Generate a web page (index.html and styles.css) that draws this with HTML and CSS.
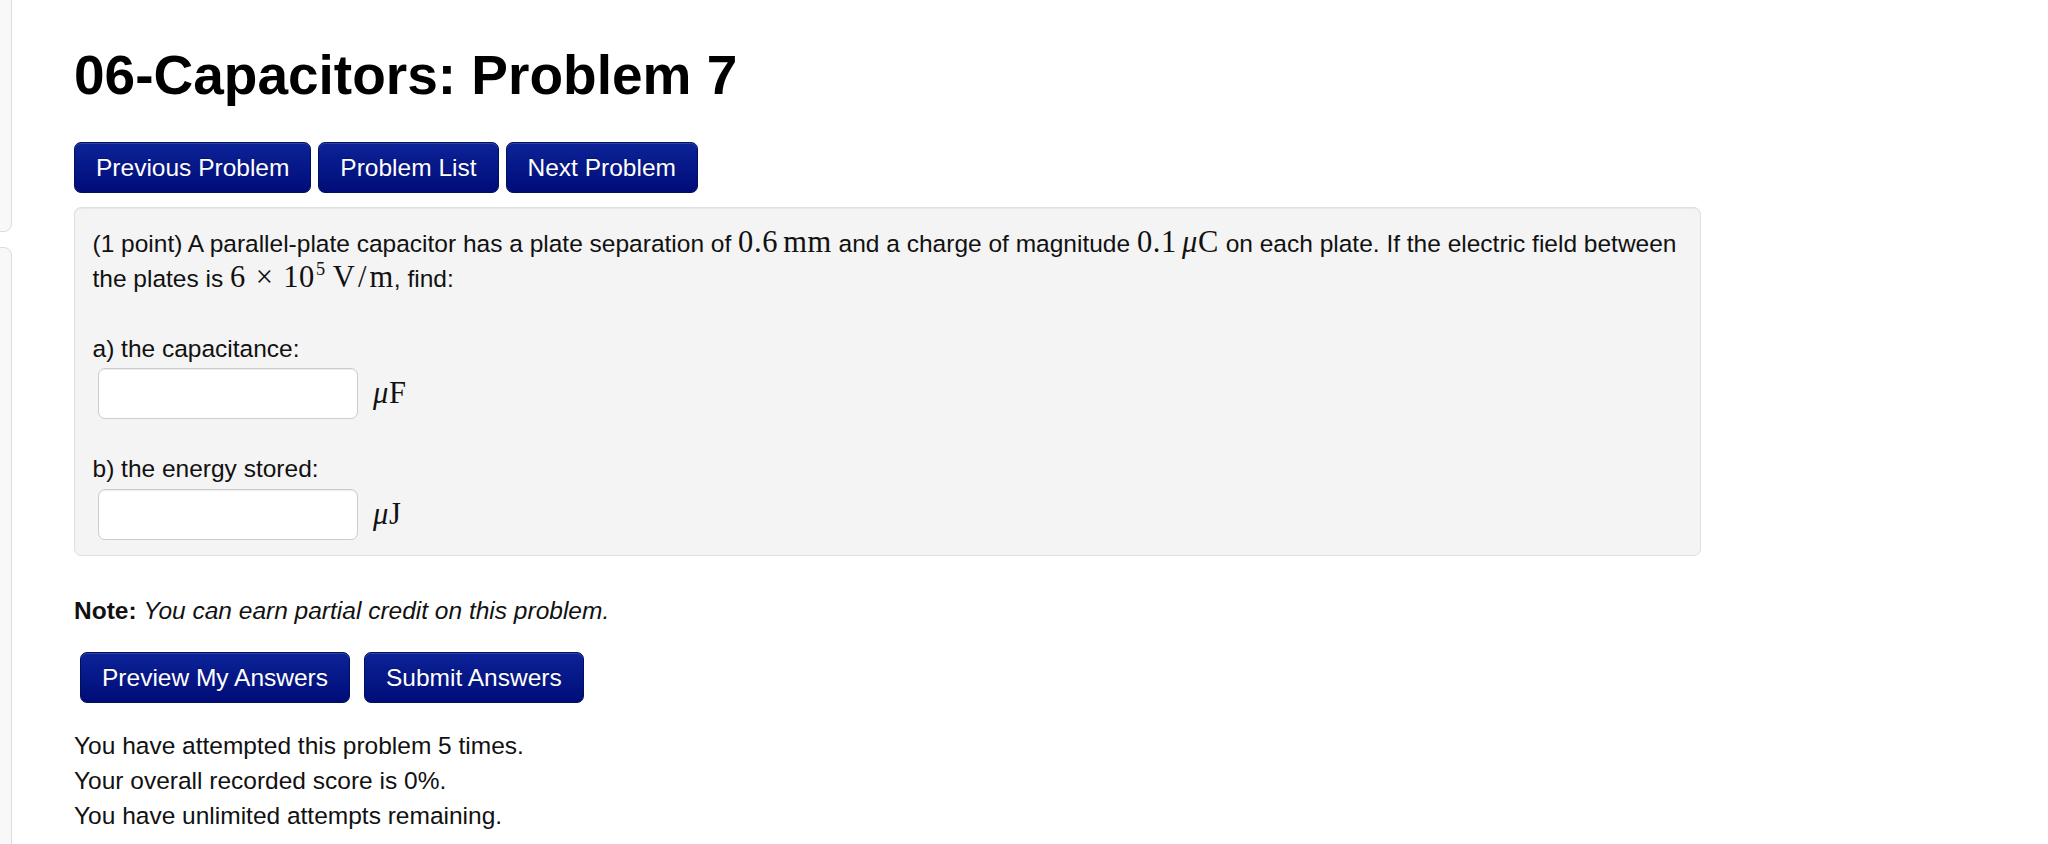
FILE: index.html
```html
<!DOCTYPE html>
<html lang="en">

<head>
	<meta charset="utf-8">
	<title>06-Capacitors: Problem 7</title>
	<link rel="stylesheet" href="styles.css">
</head>

<body>
	<div class="page">
		<aside class="side">
			<div class="side-box first"></div>
			<div class="side-box"></div>
		</aside>
		<main class="main">
			<h1>06-Capacitors: Problem 7</h1>
			<div class="nav">
				<a class="btn" href="#">Previous Problem</a>
				<a class="btn" href="#">Problem List</a>
				<a class="btn" href="#">Next Problem</a>
			</div>
			<form class="problem-form" onsubmit="return false">
				<div class="problem">
					<div class="text">
						(1 point) A parallel-plate capacitor has a plate separation of
						<span class="m">0.6<span class="ts"></span>mm</span>
						and a charge of magnitude
						<span class="m">0.1<span class="ts"></span><i>μ</i>C</span>
						on each plate. If the electric field between the plates is
						<span class="m">6<span class="op">×</span>10<span class="sup">5</span><span class="ts"></span>V<span class="sl">/</span>m</span>, find:
					</div>
					<div class="q">a) the capacitance:</div>
					<div class="ans">
						<input type="text" name="AnSwEr0001">
						<span class="unit"><i>μ</i>F</span>
					</div>
					<div class="q second">b) the energy stored:</div>
					<div class="ans last">
						<input type="text" name="AnSwEr0002">
						<span class="unit"><i>μ</i>J</span>
					</div>
				</div>
				<p class="note"><b>Note:</b> <i>You can earn partial credit on this problem.</i></p>
				<div class="actions">
					<button class="btn" type="button">Preview My Answers</button>
					<button class="btn" type="submit">Submit Answers</button>
				</div>
			</form>
			<div class="attempts">
				You have attempted this problem 5 times.<br>
				Your overall recorded score is 0%.<br>
				You have unlimited attempts remaining.
			</div>
		</main>
	</div>
</body>

</html>
```

FILE: styles.css
```css
:root {
	--c-text: #111;
	--c-well: #f4f4f4;
	--c-well-b: #e0e0e0;
	--c-side: #f8f8f8;
	--c-side-b: #dcdcdc;
	--c-btn-t: #0c2398;
	--c-btn-b: #000c78;
	--c-btn-bd: #00105a;
}

body {
	margin: 0;
	font-family: "Liberation Sans", Arial, sans-serif;
	font-size: 24.5px;
	line-height: 35px;
	color: var(--c-text);
	background: #fff;
	overflow: hidden;
}

.page {
	display: flex;
	min-height: 844px;
}

/* edge of the collapsed sidebar on the left */
.side {
	flex: none;
	width: 13px;
	overflow: hidden;
	display: flex;
	flex-direction: column;
	gap: 15px;
}

.side-box {
	box-sizing: border-box;
	width: 42px;
	margin-left: -30px;
	background: var(--c-side);
	border: 1px solid var(--c-side-b);
	border-radius: 8px;
}

.side-box.first {
	margin-top: -10px;
	height: 242px;
}

.side-box:last-child {
	flex: 1;
	margin-bottom: -10px;
}

.main {
	margin-left: 61px;
	padding-top: 40px;
}

h1 {
	margin: 0;
	font-size: 55px;
	line-height: 70px;
	font-weight: bold;
	color: #000;
}

.nav {
	display: flex;
	gap: 7px;
	margin-top: 32px;
}

.btn {
	display: inline-block;
	padding: 7px 21px;
	font-family: inherit;
	font-size: 24.5px;
	line-height: 35px;
	color: #fff;
	text-decoration: none;
	text-shadow: 0 -1px 0 rgba(0, 0, 0, 0.25);
	background: linear-gradient(var(--c-btn-t), var(--c-btn-b));
	border: 1px solid var(--c-btn-bd);
	border-radius: 7px;
	box-shadow: inset 0 1px 0 rgba(255, 255, 255, 0.15);
	cursor: pointer;
}

.problem-form {
	margin: 0;
}

.problem {
	box-sizing: border-box;
	width: 1627px;
	margin-top: 14px;
	padding: 17.5px 17.5px 15px;
	background: var(--c-well);
	border: 1px solid var(--c-well-b);
	border-radius: 7px;
	box-shadow: inset 0 1px 1px rgba(0, 0, 0, 0.05);
}

/* typeset math */
.m,
.unit {
	font-family: "Liberation Serif", "DejaVu Serif", serif;
	font-size: 30.5px;
	line-height: 1;
	letter-spacing: 0.02em;
	white-space: nowrap;
}

.ts {
	display: inline-block;
	width: 0.167em;
}

.op {
	margin: 0 0.32em;
}

.sl {
	margin: 0 0.08em;
}

.sup {
	font-size: 0.6em;
	vertical-align: 0.62em;
	line-height: 0;
	margin: 0 2px 0 1px;
}

.q {
	margin-top: 35px;
}

.q.second {
	margin-top: 32px;
}

.ans {
	display: flex;
	align-items: center;
	gap: 15px;
	margin: 2.5px 0 2.5px 5.5px;
}

.ans.last {
	margin-bottom: 0;
}

.ans input {
	box-sizing: border-box;
	width: 260px;
	height: 51px;
	margin: 0;
	padding: 7px 10px;
	font: inherit;
	background: #fff;
	border: 1px solid #ccc;
	border-radius: 7px;
	box-shadow: inset 0 1px 1px rgba(0, 0, 0, 0.075);
}

.unit {
	line-height: 35px;
}

.note {
	margin: 37px 0 0;
}

.actions {
	display: flex;
	gap: 14px;
	margin: 24.6px 0 0 6px;
}

.attempts {
	margin-top: 25px;
}
```
